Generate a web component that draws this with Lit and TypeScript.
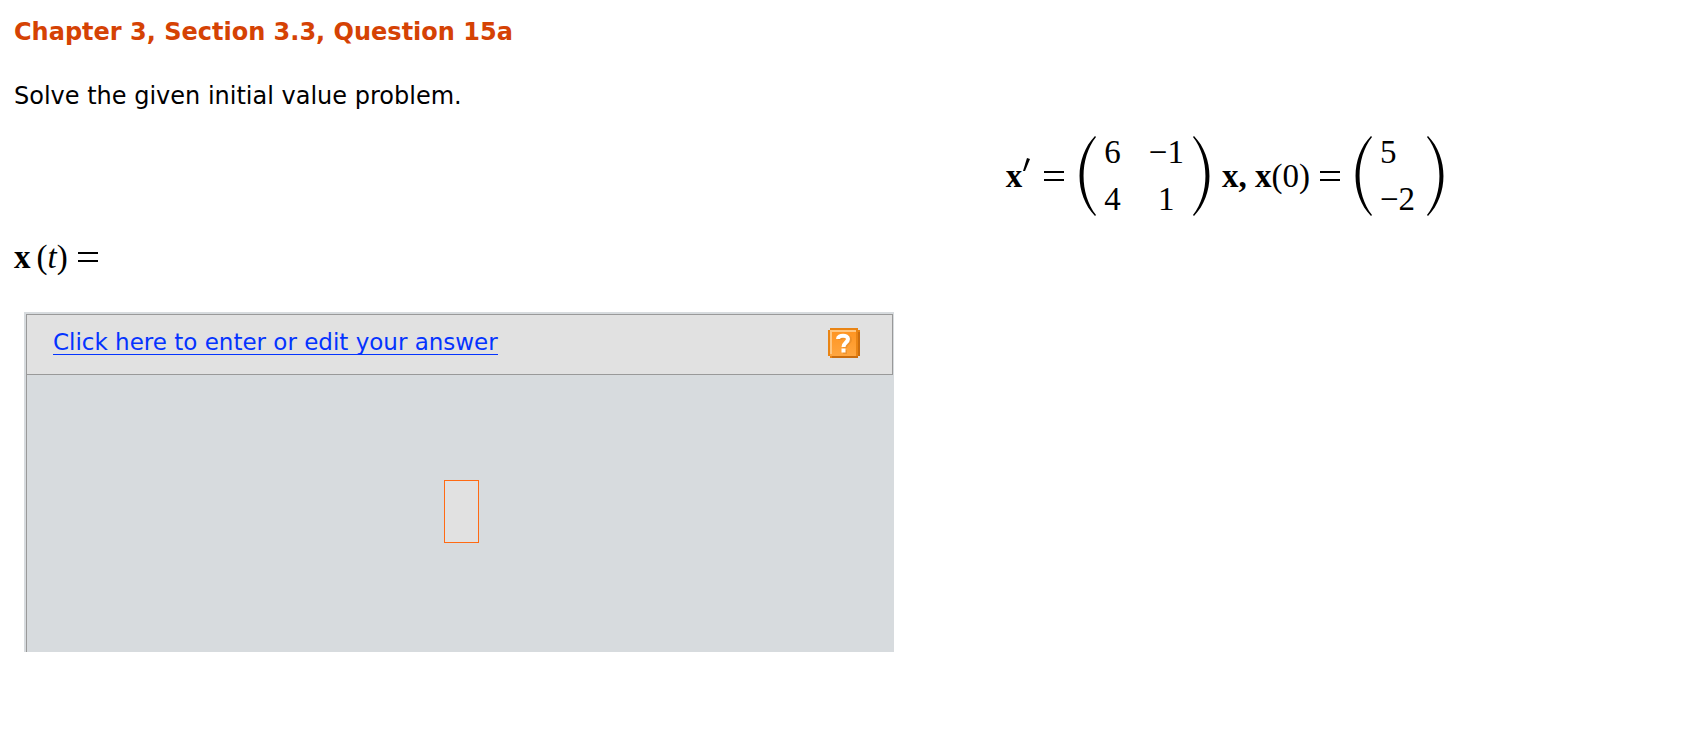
import { LitElement, html, css, svg } from "lit";
import { customElement } from "lit/decorators.js";

const paren = (side: "left" | "right") => html`
  <svg class="paren" viewBox="0 0 18 80" aria-hidden="true">
    ${side === "left"
      ? svg`<path d="M16 0 C-4.6 21 -4.6 59 16 80 L17 79 C0.4 58 0.4 22 17 1 Z" />`
      : svg`<path d="M2 0 C22.6 21 22.6 59 2 80 L1 79 C17.6 58 17.6 22 1 1 Z" />`}
  </svg>
`;

@customElement("answer-editor")
export class AnswerEditor extends LitElement {
  static styles = css`
    :host {
      display: block;
      box-sizing: border-box;
      width: 870px;
      max-width: 100%;
      padding: 2px 0 0 2px;
      background: #d7dbde;
    }
    .bar {
      display: flex;
      align-items: center;
      justify-content: space-between;
      box-sizing: border-box;
      height: 61px;
      margin-right: 1px;
      padding: 0 32px 3px 26px;
      border: 1px solid #999;
      background: #e1e1e1;
    }
    .edit {
      color: #0433ff;
      font: 23px/23px "DejaVu Sans", Verdana, sans-serif;
      text-decoration: none;
      border-bottom: 1px solid #0433ff;
    }
    .help {
      display: block;
      width: 32px;
      height: 30px;
      padding: 0;
      border: 0;
      background: none;
      cursor: pointer;
    }
    .help svg {
      display: block;
    }
    .area {
      display: grid;
      place-items: center;
      box-sizing: border-box;
      height: 277px;
      padding: 0 0 5px 2px;
      border-left: 1px solid #999;
    }
    .slot {
      box-sizing: border-box;
      width: 35px;
      height: 63px;
      padding: 0;
      border: 1px solid #ff6a13;
      border-radius: 0;
      background: #e1e1e1;
      outline: none;
    }
  `;

  render() {
    return html`
      <div class="bar">
        <a class="edit" href="#answer">Click here to enter or edit your answer</a>
        <button class="help" type="button" aria-label="Help">
          <svg width="32" height="30" viewBox="0 0 32 30">
            <defs>
              <linearGradient id="face" x1="0" y1="0" x2="0" y2="1">
                <stop offset="0" stop-color="#ff9420" />
                <stop offset="1" stop-color="#ffa640" />
              </linearGradient>
            </defs>
            <path d="M2 0h28v2h2v26h-2v2H2v-2H0V2h2z" fill="#e98414" />
            <path d="M30 4h2v24h-2v2H4v-2h26z" fill="#cb6d0e" />
            <path d="M2 2h26v26H2z" fill="url(#face)" />
            <path d="M2 2h26v2H4v22H2z" fill="#ffc680" />
            <g fill="none" stroke-width="4">
              <g stroke="#e58b2a" opacity="0.7">
                <path d="M12 12C12 8 22 7 22 12C22 15 17 15 17 20M17 22v4" />
              </g>
              <g stroke="#fff">
                <path d="M10 11C10 6.5 20 6.5 20 11C20 14.5 15.5 14.5 15.5 19M15.5 20.5v4" />
              </g>
            </g>
          </svg>
        </button>
      </div>
      <div class="area" id="answer">
        <input class="slot" type="text" aria-label="Answer" />
      </div>
    `;
  }
}

@customElement("app-root")
export class AppRoot extends LitElement {
  static styles = css`
    :host {
      display: block;
      padding: 16px 14px;
      background: #fff;
      color: #000;
      font: 24px/32px "DejaVu Sans", Verdana, sans-serif;
    }
    h1 {
      margin: 0 0 32px;
      color: #d54204;
      font: inherit;
      font-weight: bold;
    }
    p {
      margin: 0;
    }
    .math {
      display: flex;
      align-items: center;
      font: 33px/40px "Liberation Serif", "Times New Roman", serif;
      white-space: nowrap;
    }
    .equation {
      justify-content: flex-end;
      margin: 20px 228px 18px 0;
    }
    .lhs {
      margin: 0 0 35px;
    }
    .prime {
      width: 7px;
      height: 36px;
      margin-left: 1px;
    }
    .equals {
      box-sizing: border-box;
      width: 20px;
      height: 10px;
      margin: 0 15px 0 14px;
      border: solid #000;
      border-width: 2px 0;
    }
    .lhs .equals,
    .equals.value {
      margin-left: 10px;
    }
    .paren {
      width: 18px;
      height: 80px;
    }
    .matrix {
      display: grid;
      grid-template-columns: auto auto;
      column-gap: 28px;
      row-gap: 7px;
      justify-items: center;
      margin: 0 8px 0 7px;
    }
    .vector {
      display: grid;
      row-gap: 7px;
      margin: 0 11px 0 7px;
    }
    .after {
      margin-left: 12px;
    }
    .arg {
      margin-left: 6px;
    }
    .editor {
      margin-left: 10px;
    }
  `;

  render() {
    return html`
      <h1>Chapter 3, Section 3.3, Question 15a</h1>
      <p>Solve the given initial value problem.</p>
      <div class="math equation">
        <b>x</b>
        <svg class="prime" viewBox="0 0 7 36" role="img" aria-label="prime">
          <path d="M4 0 L7 1 L2 13 L0 13 Z" />
        </svg>
        <span class="equals" role="img" aria-label="equals"></span>
        ${paren("left")}
        <div class="matrix"><span>6</span><span>−1</span><span>4</span><span>1</span></div>
        ${paren("right")}
        <span class="after"><b>x, x</b>(0)</span>
        <span class="equals value" role="img" aria-label="equals"></span>
        ${paren("left")}
        <div class="vector"><span>5</span><span>−2</span></div>
        ${paren("right")}
      </div>
      <div class="math lhs">
        <b>x</b><span class="arg">(<i>t</i>)</span>
        <span class="equals" role="img" aria-label="equals"></span>
      </div>
      <answer-editor class="editor"></answer-editor>
    `;
  }
}
